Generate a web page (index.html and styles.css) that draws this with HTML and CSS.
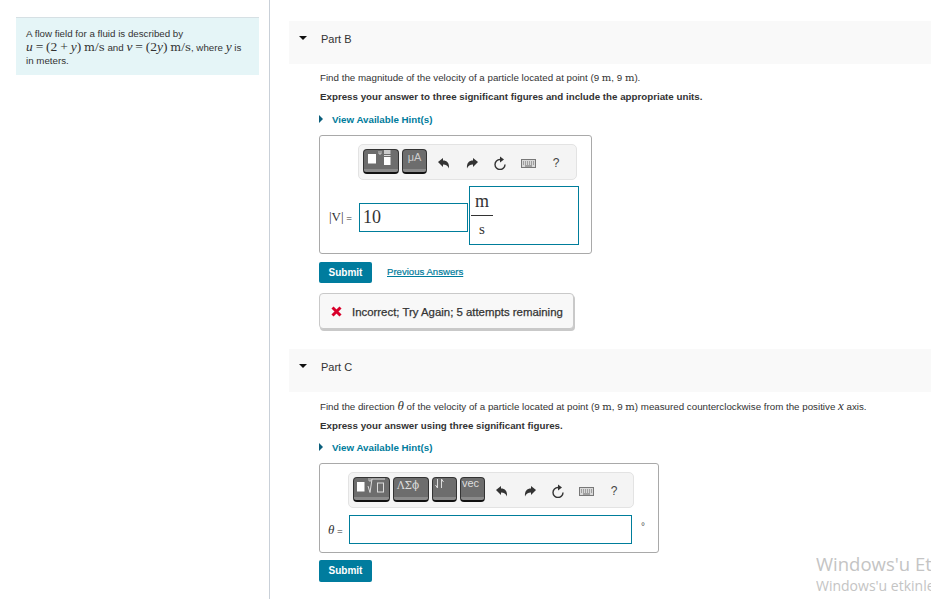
FILE: index.html
```html
<!DOCTYPE html>
<html lang="en">
<head>
<meta charset="utf-8">
<title>Flow field</title>
<link rel="stylesheet" href="styles.css">
</head>
<body>
<div class="page">
  <aside class="sidebar">
    <div class="intro">
      <div>A flow field for a fluid is described by</div>
      <div><span class="math"><i>u</i> = (2 + <i>y</i>) <span class="unit">m</span>/<span class="unit">s</span></span> and <span class="math"><i>v</i> = (2<i>y</i>) <span class="unit">m</span>/<span class="unit">s</span></span>, where <span class="math"><i>y</i></span> is</div>
      <div>in meters.</div>
    </div>
  </aside>
  <main class="main">
    <section class="part part-b">
      <header class="part-head"><span class="caret"></span><span>Part B</span></header>
      <div class="part-body">
        <p class="prompt">Find the magnitude of the velocity of a particle located at point (9 <span class="unit">m</span>, 9 <span class="unit">m</span>).</p>
        <p class="instr">Express your answer to three significant figures and include the appropriate units.</p>
        <p class="hint"><span class="hint-caret"></span>View Available Hint(s)</p>
        <div class="answer answer-b">
          <div class="toolbar">
            <span class="tb tb-tpl">
              <svg width="34" height="20" viewBox="0 0 34 20"><rect x="4" y="4" width="8" height="9.500" fill="#fff"/><path d="M15 1v3h2V1" fill="none" stroke="#ddd" stroke-width=".8"/><rect x="20" y="0" width="6.500" height="4" fill="#ccc"/><rect x="20" y="5" width="6.500" height="1" fill="#ddd"/><rect x="20" y="7" width="6.500" height="8" fill="#fff"/></svg>
            </span>
            <span class="tb tb-mu">μA</span>
            <span class="tool tool-first"><svg width="14" height="14" viewBox="0 0 14 14"><path d="M1 6 6 2v2.500c4 0 6.500 2.500 6 8-1-2.500-3-4-6-4V11z" fill="#333"/></svg></span>
            <span class="tool"><svg width="14" height="14" viewBox="0 0 14 14"><path d="M13 6 8 2v2.500c-4 0-6.500 2.500-6 8 1-2.500 3-4 6-4V11z" fill="#333"/></svg></span>
            <span class="tool"><svg width="14" height="14" viewBox="0 0 14 14"><path d="M12 8.500A5 5 0 1 1 7 3.500" fill="none" stroke="#333" stroke-width="1.400"/><path d="M7 .5v6l4-3z" fill="#333"/></svg></span>
            <span class="tool"><svg class="kbd" width="15" height="9" viewBox="0 0 15 9"><rect x=".5" y=".5" width="14" height="8" fill="#d8d8d8" stroke="#777"/><path d="M2 3h11M2 5h11" stroke="#666" stroke-dasharray="1 1"/><path d="M4 7h7" stroke="#666"/></svg></span>
            <span class="tool help">?</span>
          </div>
          <div class="row row-b">
            <span class="label"><span class="math">|V|</span> =</span>
            <span class="field field-val">10</span>
            <span class="field field-unit">
              <span class="frac"><span class="num">m</span><span class="den">s</span></span>
            </span>
          </div>
        </div>
        <div class="actions">
          <span class="btn">Submit</span>
          <a class="prev" href="#">Previous Answers</a>
        </div>
        <div class="feedback">
          <svg width="11" height="11" viewBox="0 0 11 11"><path d="M1.500 1.500 9.500 9.500M9.500 1.500 1.500 9.500" stroke="#d8002b" stroke-width="3"/></svg>
          <span class="feedback-text">Incorrect; Try Again; 5 attempts remaining</span>
        </div>
      </div>
    </section>
    <section class="part part-c">
      <header class="part-head"><span class="caret"></span><span>Part C</span></header>
      <div class="part-body">
        <p class="prompt">Find the direction <span class="math"><i>θ</i></span> of the velocity of a particle located at point (9 <span class="unit">m</span>, 9 <span class="unit">m</span>) measured counterclockwise from the positive <span class="math"><i>x</i></span> axis.</p>
        <p class="instr">Express your answer using three significant figures.</p>
        <p class="hint"><span class="hint-caret"></span>View Available Hint(s)</p>
        <div class="answer answer-c">
          <div class="toolbar">
            <span class="tb tb-root">
              <svg width="35" height="20" viewBox="0 0 35 20"><rect x="3" y="4" width="7.500" height="9.500" fill="#fff"/><path d="M14 8l2 6.500 2-13.500h13" fill="none" stroke="#ddd"/><rect x="23.500" y="5" width="6" height="9" fill="none" stroke="#ddd"/><path d="M15 0v3h2V0" fill="none" stroke="#ddd" stroke-width=".8"/></svg>
            </span>
            <span class="tb tb-greek">ΛΣϕ</span>
            <span class="tb tb-arrows">
              <svg width="23" height="20" viewBox="0 0 23 20"><path d="M4.500 1v9M4.500 10 2.500 7M8.500 10V1M8.500 1l2 3" fill="none" stroke="#ddd"/></svg>
            </span>
            <span class="tb tb-vec">vec</span>
            <span class="tool tool-first-c"><svg width="14" height="14" viewBox="0 0 14 14"><path d="M1 6 6 2v2.500c4 0 6.500 2.500 6 8-1-2.500-3-4-6-4V11z" fill="#333"/></svg></span>
            <span class="tool"><svg width="14" height="14" viewBox="0 0 14 14"><path d="M13 6 8 2v2.500c-4 0-6.500 2.500-6 8 1-2.500 3-4 6-4V11z" fill="#333"/></svg></span>
            <span class="tool"><svg width="14" height="14" viewBox="0 0 14 14"><path d="M12 8.500A5 5 0 1 1 7 3.500" fill="none" stroke="#333" stroke-width="1.400"/><path d="M7 .5v6l4-3z" fill="#333"/></svg></span>
            <span class="tool"><svg class="kbd" width="15" height="9" viewBox="0 0 15 9"><rect x=".5" y=".5" width="14" height="8" fill="#d8d8d8" stroke="#777"/><path d="M2 3h11M2 5h11" stroke="#666" stroke-dasharray="1 1"/><path d="M4 7h7" stroke="#666"/></svg></span>
            <span class="tool help">?</span>
          </div>
          <div class="row row-c">
            <span class="label"><span class="math"><i>θ</i></span> =</span>
            <span class="field field-theta"></span>
            <span class="degree">°</span>
          </div>
        </div>
        <div class="actions actions-c"><span class="btn">Submit</span></div>
      </div>
    </section>
  </main>
</div>
<div class="watermark">
  <div class="wm-title">Windows'u Etkinleştir</div>
  <div class="wm-sub">Windows'u etkinleştirmek için Ayarlar'a gidin</div>
</div>
</body>
</html>
```
FILE: styles.css
```css
html, body {
  margin: 0;
  height: 599px;
  overflow: hidden;
  background: #fff;
}
body {
  position: relative;
  font-family: "Liberation Sans", Arial, sans-serif;
  font-size: 9.75px;
  color: #333;
}
.page {
  display: flex;
  height: 599px;
}
.sidebar {
  box-sizing: border-box;
  width: 270px;
  flex: none;
  padding: 17px 10px 0 16px;
  border-right: 1px solid #c9d0d8;
}
.intro {
  box-sizing: border-box;
  height: 58px;
  padding: 9px 0 0 10px;
  background: #e5f5f7;
  border-top: 1px solid #d6e0e4;
  line-height: 13px;
  white-space: nowrap;
}
.math {
  font-family: "Liberation Serif", "DejaVu Serif", serif;
  font-size: 13px;
  word-spacing: -.5px;
}
.intro .math {
  font-size: 13.5px;
}
.math i {
  font-style: italic;
}
.unit {
  font-family: "DejaVu Serif", serif;
  font-size: 10px;
}
.intro .unit {
  font-size: 11.5px;
}
.main {
  flex: 1;
  min-width: 0;
  padding: 21px 0 0 19px;
}
.part-head {
  display: flex;
  align-items: flex-start;
  box-sizing: border-box;
  height: 43px;
  padding: 12px 0 0 10px;
  background: #f9f9f9;
  font-size: 11px;
  line-height: 13px;
  color: #333;
}
.caret {
  width: 0;
  height: 0;
  margin: 3px 14px 0 0;
  border-left: 4px solid transparent;
  border-right: 4px solid transparent;
  border-top: 4px solid #111;
}
.part-body {
  padding-left: 30px;
}
.prompt, .instr, .hint {
  margin: 0;
  line-height: 13px;
}
.prompt, .instr {
  margin-left: 1px;
}
.prompt {
  padding-top: 7px;
}
.instr {
  padding-top: 6px;
  font-weight: 700;
}
.hint {
  padding-top: 10px;
  font-weight: 700;
  color: #007c9c;
}
.part-c .hint {
  padding-top: 9px;
}
.hint-caret {
  display: inline-block;
  width: 0;
  height: 0;
  margin-right: 9px;
  border-top: 4px solid transparent;
  border-bottom: 4px solid transparent;
  border-left: 4px solid #0b5f7c;
}
.answer {
  box-sizing: border-box;
  margin-top: 9px;
  border: 1px solid #a9a9a9;
  border-radius: 3px;
}
.answer-b {
  width: 273px;
  height: 119px;
  padding: 8px 0 0 38px;
}
.answer-c {
  width: 340px;
  height: 90px;
  padding: 8px 0 0 28px;
}
.toolbar {
  display: flex;
  align-items: flex-start;
  box-sizing: border-box;
  height: 36px;
  padding: 4px 4px 0;
  gap: 3px;
  background: #f4f4f4;
  border: 1px solid #e3e3e3;
  border-radius: 5px;
}
.answer-b .toolbar {
  width: 219px;
}
.answer-c .toolbar {
  width: 286px;
}
.tb {
  display: block;
  box-sizing: border-box;
  height: 25px;
  flex: none;
  background: linear-gradient(#6d6d6d 0, #6d6d6d 19px, #8b8b8b 19px, #8b8b8b 100%);
  border: 1px solid #333;
  border-bottom: 2px solid #111;
  border-radius: 4px;
  color: #ddd;
  font-family: "Liberation Serif", serif;
  font-size: 11px;
  line-height: 14px;
  text-align: center;
  overflow: hidden;
}
.tb svg {
  display: block;
}
.tb-tpl { width: 36px; }
.tb-mu {
  width: 25px;
  font-family: "Liberation Sans", sans-serif;
  color: #ccc;
}
.tb-root { width: 37px; }
.tb-greek {
  width: 36px;
  padding-left: 3px;
  font-family: "DejaVu Serif", serif;
  font-size: 10.5px;
  text-align: left;
}
.tb-arrows {
  width: 25px;
}
.tb-vec {
  width: 25px;
  padding-left: 1px;
  font-family: "Liberation Sans", sans-serif;
  font-size: 11px;
  line-height: 10px;
  text-align: left;
}
.tool {
  display: flex;
  align-items: center;
  justify-content: center;
  flex: none;
  width: 28px;
  height: 24px;
  margin: 2px 0 0 -3px;
}
.tool-first { margin-left: 0; }
.tool-first-c { margin-left: 0; }
.help {
  font-size: 12px;
  color: #444;
}
.row {
  display: flex;
  align-items: center;
}
.row-b {
  height: 59px;
  margin: 6px 0 0 -29px;
}
.row-c {
  height: 29px;
  margin: 7px 0 0 -20px;
}
.label {
  display: block;
  flex: none;
  font-size: 9.75px;
  color: #333;
}
.row-b .label { width: 30px; margin-top: 2px; }
.row-c .label { width: 21px; }
.field {
  display: block;
  box-sizing: border-box;
  flex: none;
  border: 1px solid #007d9b;
  background: #fff;
}
.field-val {
  width: 109px;
  height: 29px;
  margin-top: 4px;
  padding-left: 3px;
  font-family: "Liberation Serif", serif;
  font-size: 18px;
  line-height: 27px;
  color: #333;
}
.field-unit {
  width: 110px;
  height: 59px;
  margin-left: 1px;
  padding: 4px 0 0 1px;
}
.frac {
  display: block;
  width: 22px;
  font-family: "Liberation Serif", serif;
  font-size: 18px;
  text-align: center;
  color: #333;
}
.num {
  display: block;
  height: 24px;
  line-height: 20px;
  border-bottom: 1px solid #333;
}
.den {
  display: block;
  line-height: 27px;
  font-size: 15px;
}
.field-theta {
  width: 283px;
  height: 29px;
}
.degree {
  margin: -6px 0 0 9px;
  font-size: 10px;
  color: #555;
}
.actions {
  display: flex;
  align-items: center;
  margin-top: 8px;
  gap: 15px;
}
.actions-c {
  margin-top: 7px;
}
.btn {
  display: block;
  width: 53px;
  height: 21px;
  border-radius: 2px;
  background: #007c9e;
  color: #fff;
  font-weight: 700;
  font-size: 10px;
  line-height: 21px;
  text-align: center;
}
.actions-c .btn {
  height: 22px;
  line-height: 22px;
}
.prev {
  margin-bottom: 2px;
  color: #007c9c;
  font-size: 9.6px;
  -webkit-text-stroke: .2px #007c9c;
  text-decoration: underline;
}
.feedback {
  display: flex;
  align-items: center;
  box-sizing: border-box;
  gap: 10px;
  width: 255px;
  height: 36px;
  margin-top: 10px;
  padding-left: 11px;
  background: #f8f8f8;
  border: 1px solid #c9c9c9;
  border-radius: 4px;
  box-shadow: 1px 2px 0 #c9c9c9;
}
.feedback-text {
  margin-top: 2px;
  font-size: 11.4px;
  -webkit-text-stroke: .25px #333;
  color: #333;
}
.part-c {
  margin-top: 20px;
}
.watermark {
  position: absolute;
  left: 816px;
  top: 552px;
  width: 115px;
  overflow: hidden;
  white-space: nowrap;
  font-family: "Open Sans", sans-serif;
  color: #c4c4c4;
}
.wm-title {
  font-size: 18.5px;
  line-height: 24px;
}
.wm-sub {
  font-size: 14px;
  line-height: 20px;
}
```
